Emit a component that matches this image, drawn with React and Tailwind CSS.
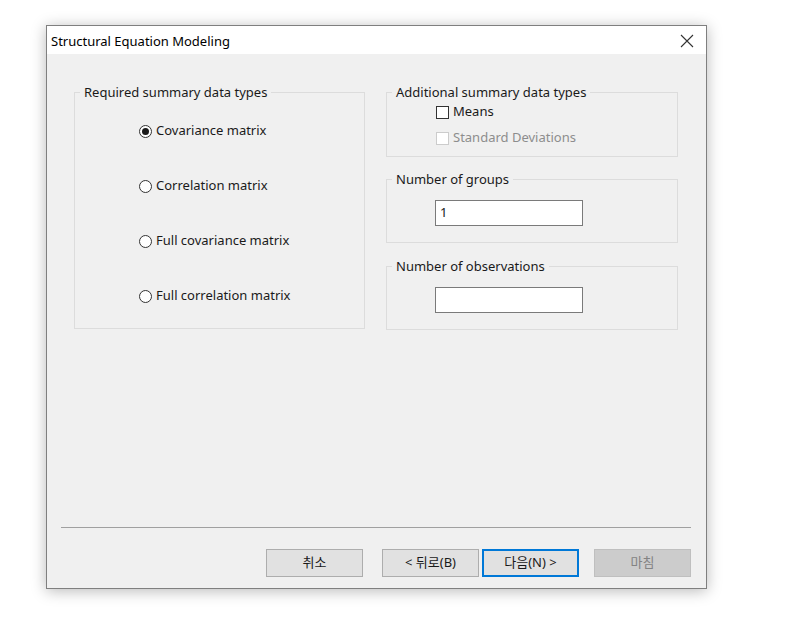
import React from "react";

const font = { fontFamily: '"Noto Sans", "Noto Sans CJK KR", sans-serif' };

function GroupBox({ title, className = "", children }) {
  return (
    <div className={`relative border border-[#dcdcdc] ${className}`}>
      <span className="absolute -top-[10px] left-[5px] bg-[#f0f0f0] px-[4px] leading-[18px] text-[13px] text-[#1a1a1a]">
        {title}
      </span>
      {children}
    </div>
  );
}

function Radio({ label, checked }) {
  return (
    <div className="flex h-[20px] items-center gap-[4px]">
      <span className="flex h-[13px] w-[13px] items-center justify-center rounded-full border border-[#333] bg-white">
        {checked && <span className="h-[7px] w-[7px] rounded-full bg-[#1a1a1a]" />}
      </span>
      <span className="text-[13px] text-[#1a1a1a]">{label}</span>
    </div>
  );
}

function Check({ label, disabled }) {
  return (
    <div className="flex h-[18px] items-center gap-[4px]">
      <span
        className={`h-[13px] w-[13px] border bg-white ${
          disabled ? "border-[#cccccc]" : "border-[#333]"
        }`}
      />
      <span className={`text-[13px] ${disabled ? "text-[#8d8d8d]" : "text-[#1a1a1a]"}`}>{label}</span>
    </div>
  );
}

function Btn({ children, variant }) {
  let cls = "border border-[#adadad] bg-[#e1e1e1] text-[#1a1a1a]";
  if (variant === "default") cls = "border-2 border-[#0078d7] bg-[#e1e1e1] text-[#1a1a1a]";
  if (variant === "disabled") cls = "border border-[#bfbfbf] bg-[#cccccc] text-[#838383]";
  return (
    <div className={`flex h-[28px] w-[97px] items-center justify-center text-[13px] ${cls}`}>
      {children}
    </div>
  );
}

export default function App() {
  return (
    <div className="min-h-[618px] w-[800px] bg-white pl-[46px] pt-[25px]" style={font}>
      <div className="flex h-[564px] w-[661px] flex-col border border-[#7f7f7f] bg-[#f0f0f0] shadow-[0_2px_14px_rgba(0,0,0,0.28)]">
        {/* title bar */}
        <div className="flex h-[28px] items-center justify-between bg-white pl-[4px] pr-[12px] pt-[3px]">
          <span className="text-[13px] text-black">Structural Equation Modeling</span>
          <svg width="14" height="14" viewBox="0 0 14 14" className="-mt-[2px] text-[#333]">
            <path d="M1 1 L13 13 M13 1 L1 13" stroke="currentColor" strokeWidth="1.1" fill="none" />
          </svg>
        </div>

        <div className="flex flex-1 flex-col">
          <div className="flex pl-[27px] pt-[38px]">
            <GroupBox title="Required summary data types" className="h-[237px] w-[291px]">
              <div className="flex flex-col gap-[35px] pl-[64px] pt-[28px]">
                <Radio label="Covariance matrix" checked />
                <Radio label="Correlation matrix" />
                <Radio label="Full covariance matrix" />
                <Radio label="Full correlation matrix" />
              </div>
            </GroupBox>

            <div className="ml-[21px] flex w-[292px] flex-col">
              <GroupBox title="Additional summary data types" className="h-[65px]">
                <div className="flex flex-col gap-[8px] pl-[49px] pt-[10px]">
                  <Check label="Means" />
                  <Check label="Standard Deviations" disabled />
                </div>
              </GroupBox>
              <GroupBox title="Number of groups" className="mt-[22px] h-[64px]">
                <div className="pl-[48px] pt-[20px]">
                  <div className="flex h-[26px] w-[148px] items-center border border-[#7a7a7a] bg-white px-[4px] text-[13px] text-[#1a1a1a]">
                    1
                  </div>
                </div>
              </GroupBox>
              <GroupBox title="Number of observations" className="mt-[23px] h-[64px]">
                <div className="pl-[48px] pt-[20px]">
                  <div className="h-[26px] w-[148px] border border-[#7a7a7a] bg-white" />
                </div>
              </GroupBox>
            </div>
          </div>

          <div className="mt-auto ml-[14px] mr-[15px] h-px bg-[#a0a0a0]" />
          <div className="flex items-center justify-end pb-[11px] pr-[15px] pt-[21px]">
            <Btn>취소</Btn>
            <div className="ml-[19px]">
              <Btn>&lt; 뒤로(B)</Btn>
            </div>
            <div className="ml-[3px]">
              <Btn variant="default">다음(N) &gt;</Btn>
            </div>
            <div className="ml-[15px]">
              <Btn variant="disabled">마침</Btn>
            </div>
          </div>
        </div>
      </div>
    </div>
  );
}
